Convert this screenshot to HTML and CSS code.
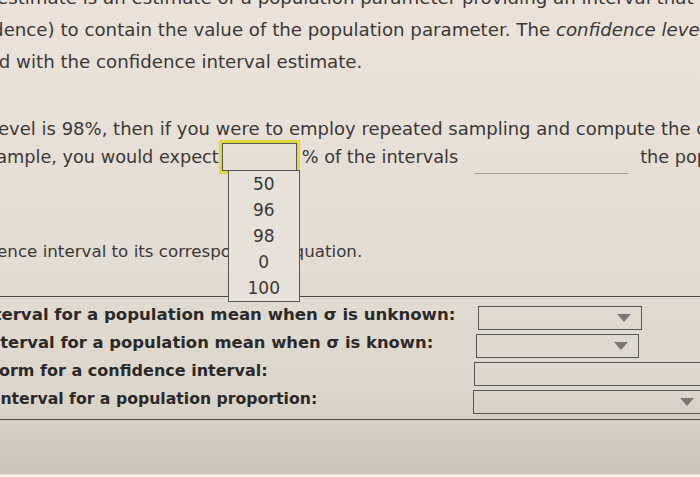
FILE: index.html
```html
<!DOCTYPE html>
<html lang="en">
<head>
<meta charset="utf-8">
<title>Confidence intervals</title>
<link rel="stylesheet" href="styles.css">
</head>
<body>
<div class="intro">
  <div class="ln l0">estimate is an estimate of a population parameter providing an interval that</div>
  <div class="ln l1">confidence) to contain the value of the population parameter. The <i>confidence level</i> is</div>
  <div class="ln l2">associated with the confidence interval estimate.</div>
</div>

<div class="question">
  <div class="ln l3">level is 98%, then if you were to employ repeated sampling and compute the confidence interval</div>
  <div class="ln l4">sample, you would expect<span class="pick"><span class="menu"><span class="opt">50</span><span class="opt">96</span><span class="opt">98</span><span class="opt">0</span><span class="opt">100</span></span></span><span class="after">% of the intervals</span><span class="blank"></span>the population parameter.</div>
</div>

<div class="ln match">confidence interval to its corresponding equation.</div>

<div class="rule"></div>

<div class="rows">
  <div class="row r1">
    <div class="lab">interval for a population mean when σ is unknown:</div>
    <div class="box">
      <svg class="arrow" width="14" height="8" viewBox="0 0 14 8"><polygon points="0,0 14,0 7,8"/></svg>
    </div>
  </div>
  <div class="row r2">
    <div class="lab">interval for a population mean when σ is known:</div>
    <div class="box">
      <svg class="arrow" width="14" height="8" viewBox="0 0 14 8"><polygon points="0,0 14,0 7,8"/></svg>
    </div>
  </div>
  <div class="row r3">
    <div class="lab">form for a confidence interval:</div>
    <div class="box"></div>
  </div>
  <div class="row r4">
    <div class="lab">interval for a population proportion:</div>
    <div class="box">
      <svg class="arrow" width="14" height="8" viewBox="0 0 14 8"><polygon points="0,0 14,0 7,8"/></svg>
    </div>
  </div>
</div>

<div class="rule rule-end"></div>
</body>
</html>
```

FILE: styles.css
```css
html, body {
  margin: 0;
  padding: 0;
}

body {
  width: 700px;
  height: 477px;
  overflow: hidden;
  font-family: "DejaVu Sans", Verdana, sans-serif;
  color: #3a3938;
  background: linear-gradient(to bottom,
    #ece2d9 0px,
    #e9e0d7 120px,
    #e3dcd3 260px,
    #ddd6cc 390px,
    #d4cdc2 430px,
    #ccc4b9 474px,
    #f3f1ee 475px,
    #f3f1ee 477px);
}

.ln {
  white-space: nowrap;
}

.intro {
  margin-top: -18.5px;
  font-size: 18.2px;
  line-height: 32px;
}

.l0 { text-indent: -3px; }
.l1 { text-indent: -52px; }
.l2 { text-indent: -87px; }

.question {
  margin-top: 37.5px;
  line-height: 28px;
}

.l3 {
  font-size: 18px;
  text-indent: -7px;
}

.l4 {
  font-size: 17.7px;
  text-indent: -13px;
}

.pick {
  position: relative;
  display: inline-block;
  width: 75px;
  height: 28px;
  box-sizing: border-box;
  border: 1.5px solid #555;
  outline: 3px solid #e2d93e;
  vertical-align: -8px;
  margin: 0 5px 0 3px;
  text-indent: 0;
}

.menu {
  position: absolute;
  top: 25.5px;
  left: 5px;
  width: 72px;
  box-sizing: border-box;
  border: 1.5px solid #555;
  background: #e7e1d9;
  display: flex;
  flex-direction: column;
  text-indent: 0;
}

.opt {
  display: block;
  font-size: 17px;
  line-height: 26px;
  text-align: center;
}

.blank {
  display: inline-block;
  width: 153px;
  height: 10px;
  border-bottom: 1.5px solid #a19b93;
  vertical-align: -7px;
  margin: 0 12px -4px 17px;
}

.match {
  margin-top: 66px;
  font-size: 16.7px;
  line-height: 28px;
  text-indent: -54px;
}

.rule {
  border-top: 1.5px solid #4a4a4a;
  margin: 30.5px 0 4px;
}

.rule-end {
  margin: 6px 0 0;
}

.rows {
  display: flex;
  flex-direction: column;
}

.row {
  display: flex;
  align-items: flex-start;
  height: 28px;
}

.lab {
  flex: none;
  font-weight: bold;
  line-height: 28px;
  white-space: nowrap;
  overflow: hidden;
  color: #2b2a29;
}

.box {
  flex: none;
  margin-top: 5px;
  height: 24px;
  box-sizing: border-box;
  border: 1.5px solid #565656;
  display: flex;
  align-items: center;
  justify-content: flex-end;
  padding-right: 10px;
}

.arrow {
  fill: #7a7876;
}

.r1 .lab { width: 478px; font-size: 16.6px; text-indent: -24px; }
.r1 .box { width: 164px; }

.r2 .lab { width: 476px; font-size: 16.4px; text-indent: -17px; }
.r2 .box { width: 163px; }

.r3 .lab { width: 474px; font-size: 16px; text-indent: -8px; }
.r3 .box { width: 250px; }

.r4 .lab { width: 473px; font-size: 15.7px; text-indent: -5px; }
.r4 .box { width: 232px; }
```
